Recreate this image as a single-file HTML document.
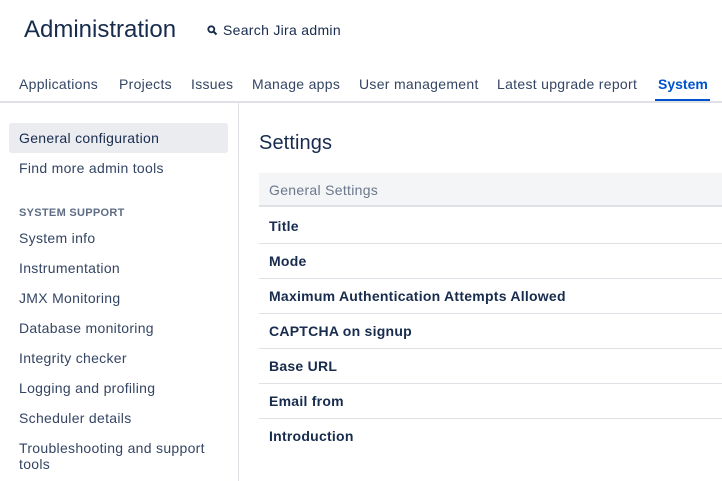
<!DOCTYPE html>
<html><head><style>
*{margin:0;padding:0;box-sizing:border-box}
body{width:722px;height:481px;overflow:hidden;background:#fff;font-family:"Liberation Sans",sans-serif;color:#172b4d;position:relative;letter-spacing:0.3px}
.a{position:absolute;white-space:nowrap}
h1{position:absolute;left:24px;top:16px;font-size:24px;font-weight:400;letter-spacing:0px}
.nav{font-size:14px;color:#344563;top:76px}
.side{font-size:14px;color:#344563;left:19px}
.row{position:absolute;left:259px;width:463px;height:35px;border-bottom:1px solid #dfe1e6;font-size:14px;font-weight:bold;padding:9px 10px;color:#172b4d;letter-spacing:0.25px}
</style></head><body>
<h1>Administration</h1>
<svg class="a" style="left:207px;top:25px" width="11" height="11" viewBox="0 0 11 11"><circle cx="4.3" cy="4.3" r="3" fill="none" stroke="#172b4d" stroke-width="1.8"/><line x1="6.5" y1="6.5" x2="9.5" y2="9.5" stroke="#172b4d" stroke-width="2"/></svg>
<div class="a" style="left:223px;top:22px;font-size:14px;color:#172b4d">Search Jira admin</div>
<div class="a nav" style="left:19px">Applications</div>
<div class="a nav" style="left:119px">Projects</div>
<div class="a nav" style="left:191px">Issues</div>
<div class="a nav" style="left:252px">Manage apps</div>
<div class="a nav" style="left:359px">User management</div>
<div class="a nav" style="left:497px">Latest upgrade report</div>
<div class="a nav" style="left:658px;color:#0052cc;font-weight:bold;letter-spacing:0">System</div>
<div class="a" style="left:655px;top:99px;width:55px;height:3px;background:#0052cc"></div>
<div class="a" style="left:0;top:101px;width:722px;height:2px;background:#dfe1e6"></div>
<div class="a" style="left:238px;top:103px;width:1px;height:378px;background:#dfe1e6"></div>
<div class="a" style="left:9px;top:123px;width:219px;height:30px;background:#ebecf0;border-radius:3px"></div>
<div class="a side" style="top:130px;color:#172b4d">General configuration</div>
<div class="a side" style="top:160px">Find more admin tools</div>
<div class="a side" style="top:207px;font-size:11px;font-weight:bold;color:#5e6c84">SYSTEM SUPPORT</div>
<div class="a side" style="top:230px">System info</div>
<div class="a side" style="top:260px">Instrumentation</div>
<div class="a side" style="top:290px">JMX Monitoring</div>
<div class="a side" style="top:320px">Database monitoring</div>
<div class="a side" style="top:350px">Integrity checker</div>
<div class="a side" style="top:380px">Logging and profiling</div>
<div class="a side" style="top:410px">Scheduler details</div>
<div class="a side" style="top:440px;line-height:16px">Troubleshooting and support<br>tools</div>
<div class="a" style="left:259px;top:132px;font-size:20px;letter-spacing:0.1px">Settings</div>
<div class="a" style="left:259px;top:173px;width:463px;height:34px;background:#f4f5f7;border-bottom:2px solid #dfe1e6;font-size:14px;color:#6b778c;padding:9px 10px">General Settings</div>
<div class="row" style="top:209px">Title</div>
<div class="row" style="top:244px">Mode</div>
<div class="row" style="top:279px">Maximum Authentication Attempts Allowed</div>
<div class="row" style="top:314px">CAPTCHA on signup</div>
<div class="row" style="top:349px">Base URL</div>
<div class="row" style="top:384px">Email from</div>
<div class="row" style="top:419px;border:none">Introduction</div>
</body></html>
